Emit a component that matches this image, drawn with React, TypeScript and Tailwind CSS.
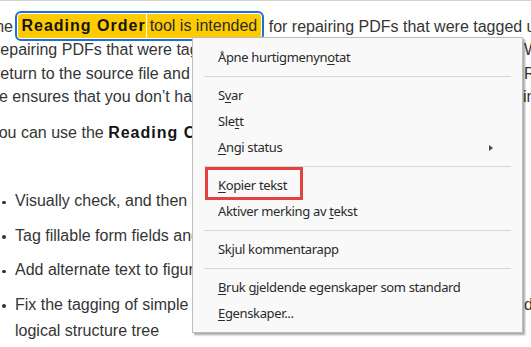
import type { ReactNode } from 'react'

// Bakgrunnsside med tekst og en hurtigmeny over
const sans = { fontFamily: '"Liberation Sans", Arial, sans-serif' }
const ui = { fontFamily: '"Noto Sans", "Open Sans", sans-serif' }

function Line({ children, right, rightW = 'w-[7px]', className = '' }: { children: ReactNode; right?: string; rightW?: string; className?: string }) {
  return (
    <div className="flex h-[23.5px] leading-[23.5px] whitespace-pre">
      <span className={`min-w-0 flex-1 overflow-hidden ${className}`}>{children}</span>
      {right && <span className={`${rightW} shrink-0 overflow-hidden`}>{right}</span>}
    </div>
  )
}

function Bullet({ children }: { children: ReactNode }) {
  return (
    <li className="flex items-start leading-[26.5px]">
      <span className="w-[15px] shrink-0 pl-[2px] pt-[12.5px]">
        <span className="block h-[3.5px] w-[3.5px] rounded-full bg-[#333]" />
      </span>
      <div className="min-w-0 flex-1">{children}</div>
    </li>
  )
}

type Item = { label: ReactNode; arrow?: boolean } | 'sep'

const items: Item[] = [
  { label: <>Åpne hurtigmenyn<u>o</u>tat</> },
  'sep',
  { label: <>S<u>v</u>ar</> },
  { label: <>Sle<u>t</u>t</> },
  { label: <><u>A</u>ngi status</>, arrow: true },
  'sep',
  { label: <><u>K</u>opier tekst</> },
  { label: <>Aktiver merking av <u>t</u>ekst</> },
  'sep',
  { label: <>Skjul kommentarapp</> },
  'sep',
  { label: <><u>B</u>ruk gjeldende egenskaper som standard</> },
  { label: <><u>E</u>genskaper...</> },
]

function Menu() {
  return (
    <div
      className="absolute left-[192px] top-[36px] w-[331px] border border-[#bdbdbd] bg-[#f9f9f9] py-[6px] text-[13px] tracking-[-0.35px] text-[#2a2a2a] shadow-[2px_2px_2px_rgba(0,0,0,0.35)]"
      style={ui}
    >
      {items.map((it, i) =>
        it === 'sep' ? (
          <div key={i} className="flex h-[12px] items-center px-[11px]">
            <div className="h-px flex-1 bg-[#d6d6d6]" />
          </div>
        ) : (
          <div key={i} className="flex h-[26px] items-center pl-[25px] pt-[2px] whitespace-nowrap [&_u]:underline-offset-[2px]">
            <span>{it.label}</span>
            {it.arrow && (
              <span className="ml-auto mr-[29px] h-0 w-0 border-y-[3.5px] border-l-[4px] border-y-transparent border-l-[#4a4a4a]" />
            )}
          </div>
        )
      )}
      {/* markering rundt "Kopier tekst" */}
      <div className="absolute left-[12px] top-[129px] h-[33px] w-[98px] border-[3px] border-[#e4423d]" />
    </div>
  )
}

export default function App() {
  return (
    <div className="relative h-[347px] w-[531px] overflow-hidden border-t border-[#d2d2d2] bg-white text-[16px] text-[#353535]" style={sans}>
      <div className="pt-[13.5px]">
        <div className="flex h-[23.5px] items-center whitespace-pre">
          <span className="ml-[-14.6px] leading-[23.5px]">The</span>
          <span className="ml-[2px] flex h-[30px] shrink-0 rounded-[6px] border-[2.5px] border-[#1d6fd0] bg-white p-[1px] leading-[23px]">
            <span className="rounded-l-[3px] bg-[#fecb00] pl-[3.5px] font-bold tracking-[1px] text-[#141414]">Reading Order</span>
            <span className="ml-[1px] rounded-r-[3px] bg-[#fecb00] pl-[3px] pr-[4px] text-[#2c2c2c]">tool is intended</span>
          </span>
          <span className="min-w-0 flex-1 overflow-hidden leading-[23.5px]"> for repairing PDFs that were tagged using</span>
        </div>
        <Line right="With" className="ml-[-5px]">repairing PDFs that were tagged using the Make Accessible action.</Line>
        <Line right="Re" className="ml-[-5px]">return to the source file and save it again as a tagged PDF.</Line>
        <Line right="in" rightW="w-[8px]" className="ml-[-1px]">e ensures that you don’t have to repeat the repair work</Line>

        <div className="mt-[12px]">
          <Line className="ml-[-10.5px]">
            You can use the <b className="tracking-[1px] text-[#141414]">Reading Order</b> tool to:
          </Line>
        </div>

        <ul className="mt-[44px] flex flex-col gap-[8px]">
          <Bullet>Visually check, and then fix the reading order of page content</Bullet>
          <Bullet>Tag fillable form fields and their labels</Bullet>
          <Bullet>Add alternate text to figures and descriptions to form fields</Bullet>
          <Bullet>
            <div className="flex whitespace-pre">
              <span className="min-w-0 flex-1 overflow-hidden">Fix the tagging of simple tables, and prepare complex tables</span>
              <span className="w-[7px] shrink-0 overflow-hidden">d</span>
            </div>
            <div>logical structure tree</div>
          </Bullet>
        </ul>
      </div>
      <Menu />
    </div>
  )
}
